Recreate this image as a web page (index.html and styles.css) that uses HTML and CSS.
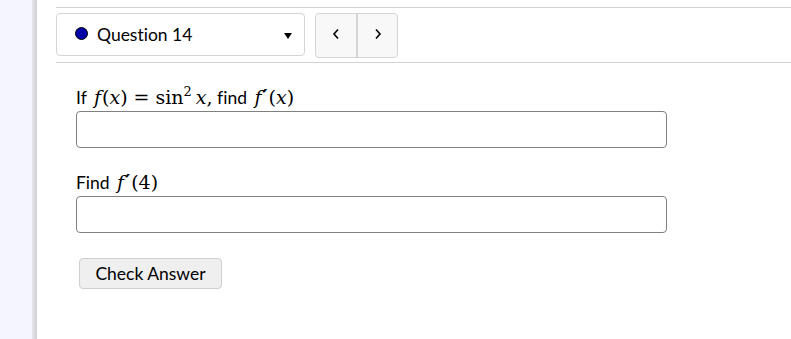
FILE: index.html
```html
<!DOCTYPE html>
<html>
<head>
<meta charset="utf-8">
<link rel="stylesheet" href="styles.css">
</head>
<body>
<div class="page">
  <aside class="sidebar"></aside>
  <div class="shadow"></div>
  <main class="main">
    <div class="toolbar">
      <div class="select">
        <span class="dot"></span>
        <span class="qlabel">Question 14</span>
        <span class="caret"></span>
      </div>
      <div class="nav">
        <button class="navbtn" aria-label="Previous"><svg width="8" height="12" viewBox="0 0 8 12"><path d="M6 1.5 L2 6 L6 10.5" fill="none" stroke="#000" stroke-width="1.6"/></svg></button>
        <button class="navbtn" aria-label="Next"><svg width="8" height="12" viewBox="0 0 8 12"><path d="M2 1.5 L6 6 L2 10.5" fill="none" stroke="#000" stroke-width="1.6"/></svg></button>
      </div>
    </div>
    <div class="question">
      <p class="prompt">If <span class="m"><i class="fi">f</i>(<i>x</i>)<span class="rel">=</span>sin<sup>2</sup><i class="arg">x</i>,</span> find <span class="m"><i class="fi">f</i><span class="pr">&prime;</span>(<i>x</i>)</span></p>
      <input class="answer" type="text">
      <p class="prompt second">Find <span class="m"><i class="fi">f</i><span class="pr">&prime;</span>(4)</span></p>
      <input class="answer" type="text">
      <button class="check">Check Answer</button>
    </div>
  </main>
</div>
</body>
</html>
```

FILE: styles.css
```css
html, body {
  margin: 0;
  padding: 0;
  background: #fff;
  font-family: Lato, "Open Sans", sans-serif;
  font-variant-ligatures: none;
  color: #000;
}
.page {
  display: flex;
  height: 339px;
  overflow: hidden;
}
.sidebar {
  width: 32px;
  background: #f5f5fd;
  flex: none;
}
.shadow {
  width: 5px;
  flex: none;
  background: linear-gradient(to right, #e6e6ec, #cfcfd4);
}
.main {
  flex: 1;
  padding-left: 19px;
  padding-top: 7px;
}
.toolbar {
  border-top: 1px solid #d2d2d2;
  border-bottom: 1px solid #d2d2d2;
  padding: 5px 0 4px;
  display: flex;
  gap: 10px;
}
.select {
  width: 247px;
  height: 41px;
  border: 1px solid #d4d4d4;
  border-radius: 4px;
  display: flex;
  align-items: center;
}
.dot {
  width: 11px;
  height: 11px;
  border-radius: 50%;
  background: #0000a6;
  border: 1px solid #000;
  margin-left: 18px;
  margin-top: -2px;
}
.qlabel {
  margin-left: 9px;
  font-size: 17.5px;
  flex: 1;
}
.caret {
  width: 0;
  height: 0;
  border-left: 4px solid transparent;
  border-right: 4px solid transparent;
  border-top: 6px solid #000;
  margin-right: 12px;
  margin-top: 2px;
}
.nav {
  display: flex;
  height: 43px;
  border: 1px solid #d4d4d4;
  border-radius: 4px;
  background: #f8f8f8;
  overflow: hidden;
}
.navbtn {
  width: 40px;
  border: 0;
  background: transparent;
  padding: 0 0 4px;
  display: flex;
  align-items: center;
  justify-content: center;
}
.navbtn + .navbtn {
  border-left: 2px solid #d4d4d4;
  width: 41px;
}
.question {
  padding-left: 20px;
  display: flex;
  flex-direction: column;
  align-items: flex-start;
}
.prompt {
  margin: 22px 0 0;
  font-size: 17.5px;
  line-height: 24px;
  height: 24px;
}
.prompt.second {
  margin-top: 22px;
}
.m {
  font-family: "DejaVu Serif", "Liberation Serif", serif;
  font-size: 19px;
  margin-left: 3px;
}
.fi {
  margin-right: 1px;
}
.pr {
  font-family: "DejaVu Sans", sans-serif;
  font-weight: bold;
  font-size: 19px;
  margin-left: 0;
  margin-right: 1px;
  position: relative;
  top: -1px;
}
.rel {
  margin: 0 6px;
}
.arg {
  margin-left: 4px;
}
.m sup {
  font-size: 13px;
  vertical-align: 0;
  position: relative;
  top: -8px;
}
.answer {
  margin: 2px 0 0;
  width: 591px;
  height: 37px;
  box-sizing: border-box;
  border: 1px solid #808080;
  border-radius: 4px;
  padding: 0 6px;
}
.check {
  margin: 25px 0 0 3px;
  width: 143px;
  height: 31px;
  background: #efefef;
  border: 1px solid #cfcfcf;
  border-radius: 4px;
  font-family: Lato, "Open Sans", sans-serif;
  font-variant-ligatures: none;
  font-size: 17.5px;
  color: #000;
  padding: 0;
}
```
